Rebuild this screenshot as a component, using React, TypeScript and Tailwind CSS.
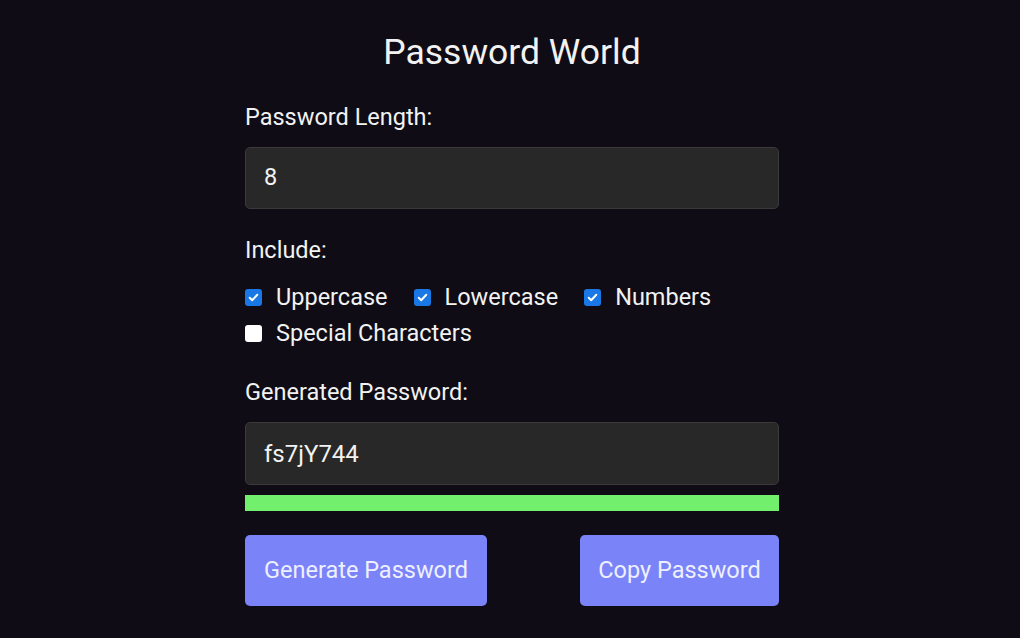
import React from "react";

function Box({ checked }: { checked: boolean }) {
  return checked ? (
    <span className="flex h-[17px] w-[17px] items-center justify-center rounded-[3px] bg-[#1a78e6]">
      <svg width="13" height="13" viewBox="0 0 12 12" fill="none">
        <path d="M2.5 6.2l2.3 2.3 4.7-5" stroke="white" strokeWidth="1.8" strokeLinecap="round" strokeLinejoin="round" />
      </svg>
    </span>
  ) : (
    <span className="block h-[17px] w-[17px] rounded-[3px] bg-white" />
  );
}

function Check({ label, checked }: { label: string; checked: boolean }) {
  return (
    <label className="flex items-center gap-[14px]">
      <Box checked={checked} />
      <span>{label}</span>
    </label>
  );
}

export default function App() {
  return (
    <div
      className="flex h-[638px] w-[1020px] justify-center bg-[#0f0c15] text-[#f2f2f2]"
      style={{ fontFamily: "Roboto, 'Noto Sans', sans-serif" }}
    >
      <div className="ml-[4px] flex w-[534px] flex-col pt-[31px]">
        <h1 className="text-center text-[35.5px] leading-[42px]">Password World</h1>
        <div className="mt-[30px] text-[23.5px] leading-[28px]">Password Length:</div>
        <div className="mt-[16px] flex h-[62px] items-center rounded-[5px] border border-[#3a3a3a] bg-[#282828] px-[18px] text-[23.5px]">
          8
        </div>
        <div className="mt-[27px] text-[23.5px] leading-[28px]">Include:</div>
        <div className="mt-[19px] flex flex-wrap gap-x-[26px] text-[23.5px] leading-[28px]">
          <Check label="Uppercase" checked />
          <Check label="Lowercase" checked />
          <Check label="Numbers" checked />
        </div>
        <div className="mt-[8px] text-[23.5px] leading-[28px]">
          <Check label="Special Characters" checked={false} />
        </div>
        <div className="mt-[31px] text-[23.5px] leading-[28px]">Generated Password:</div>
        <div className="mt-[16px] flex h-[63px] items-center rounded-[5px] border border-[#3a3a3a] bg-[#282828] px-[18px] text-[24px]">
          fs7jY744
        </div>
        <div className="mt-[10px] h-[16px] bg-[#72ef6c]" />
        <div className="mt-[24px] flex justify-between">
          <button className="h-[71px] w-[242px] rounded-[5px] bg-[#7a83f8] text-[23.5px] text-[#eef0ff]">
            Generate Password
          </button>
          <button className="h-[71px] w-[199px] rounded-[5px] bg-[#7a83f8] text-[23.5px] text-[#eef0ff]">
            Copy Password
          </button>
        </div>
      </div>
    </div>
  );
}
